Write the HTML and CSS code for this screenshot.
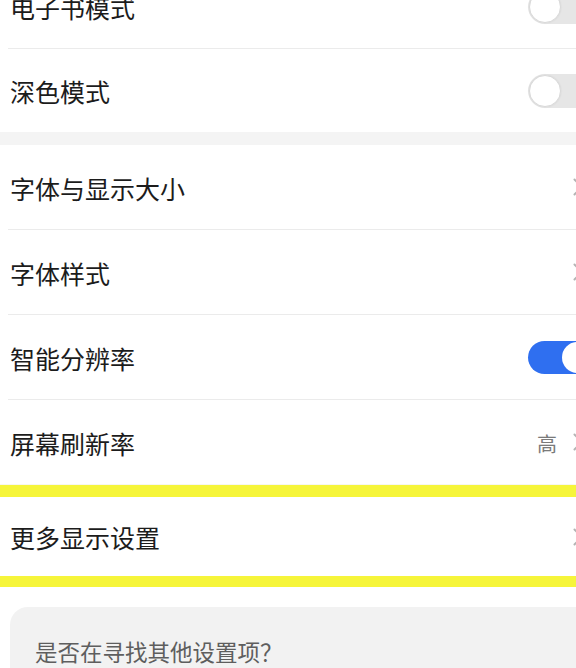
FILE: index.html
```html
<!DOCTYPE html>
<html lang="zh-CN">
<head>
<meta charset="utf-8">
<link rel="stylesheet" href="styles.css">
</head>
<body>
<div class="page">
  <section class="group">
    <div class="row r83">
      <span class="label">电子书模式</span>
      <span class="switch off"><span class="knob"></span></span>
    </div>
    <div class="divider"></div>
    <div class="row r83">
      <span class="label">深色模式</span>
      <span class="switch off"><span class="knob"></span></span>
    </div>
  </section>
  <div class="gap"></div>
  <section class="group">
    <div class="row">
      <span class="label">字体与显示大小</span>
      <span class="chev"><svg width="10" height="18" viewBox="0 0 10 18"><polyline points="1.5,1.5 8.5,9 1.5,16.5" fill="none" stroke="#b4b4b4" stroke-width="2" stroke-linecap="round" stroke-linejoin="round"/></svg></span>
    </div>
    <div class="divider"></div>
    <div class="row">
      <span class="label">字体样式</span>
      <span class="chev"><svg width="10" height="18" viewBox="0 0 10 18"><polyline points="1.5,1.5 8.5,9 1.5,16.5" fill="none" stroke="#b4b4b4" stroke-width="2" stroke-linecap="round" stroke-linejoin="round"/></svg></span>
    </div>
    <div class="divider"></div>
    <div class="row">
      <span class="label">智能分辨率</span>
      <span class="switch on"><span class="knob"></span></span>
    </div>
    <div class="divider"></div>
    <div class="row">
      <span class="label">屏幕刷新率</span>
      <span class="right">
        <span class="value">高</span>
        <span class="chev"><svg width="10" height="18" viewBox="0 0 10 18"><polyline points="1.5,1.5 8.5,9 1.5,16.5" fill="none" stroke="#b4b4b4" stroke-width="2" stroke-linecap="round" stroke-linejoin="round"/></svg></span>
      </span>
    </div>
  </section>
  <div class="thin"></div>
  <div class="mark"></div>
  <div class="row r79">
    <span class="label">更多显示设置</span>
    <span class="chev"><svg width="10" height="18" viewBox="0 0 10 18"><polyline points="1.5,1.5 8.5,9 1.5,16.5" fill="none" stroke="#b4b4b4" stroke-width="2" stroke-linecap="round" stroke-linejoin="round"/></svg></span>
  </div>
  <div class="mark m11"></div>
  <div class="card">
    <p class="hint">是否在寻找其他设置项？</p>
  </div>
</div>
</body>
</html>
```

FILE: styles.css
```css
html, body {
  margin: 0;
  padding: 0;
  background: #ffffff;
  overflow: hidden;
}
body {
  width: 576px;
  height: 668px;
  font-family: "Noto Sans CJK SC", "Noto Sans", sans-serif;
  color: #1c1c1c;
}
.page {
  width: 600px;
  margin-top: -35px;
}
.group {
  background: #ffffff;
}
.row {
  display: flex;
  align-items: center;
  justify-content: space-between;
  height: 84px;
  padding: 0 5px 0 10px;
  box-sizing: border-box;
  background: #ffffff;
}
.r83 { height: 83px; }
.r79 { height: 79px; }
.label {
  font-size: 25px;
  line-height: 1;
  padding-top: 2px;
  letter-spacing: 0;
}
.divider {
  height: 1px;
  margin-left: 8px;
  background: #ebebeb;
}
.gap {
  height: 13px;
  background: #f4f4f4;
}
.thin {
  height: 1px;
  background: #f7f7ef;
}
.mark {
  height: 12px;
  background: #f6f53a;
}
.m11 { height: 11px; }
.switch {
  display: flex;
  align-items: center;
  width: 67px;
  height: 34px;
  border-radius: 17px;
  box-sizing: border-box;
  padding: 1px;
}
.switch.off {
  background: #e6e6e6;
  justify-content: flex-start;
}
.switch.on {
  background: #2f6ff0;
  justify-content: flex-end;
  height: 33px;
  padding: 1px 2px;
}
.knob {
  width: 32px;
  height: 32px;
  border-radius: 50%;
  background: #ffffff;
  box-sizing: border-box;
}
.switch.off .knob {
  border: 1.5px solid #d9d9d9;
  box-shadow: 0 0 2px rgba(0,0,0,0.08);
}
.switch.on .knob {
  width: 31px;
  height: 31px;
}
.right {
  display: flex;
  align-items: center;
}
.value {
  font-size: 20px;
  color: #7a7a7a;
  margin-right: 16px;
  padding-top: 2px;
}
.chev {
  display: flex;
  align-items: center;
  width: 22px;
  height: 20px;
}
.chev svg { display: block; }
.card {
  margin: 20px 0 0 10px;
  height: 120px;
  background: #f2f2f2;
  border-radius: 18px;
  padding: 33px 0 0 25px;
  box-sizing: border-box;
}
.hint {
  margin: 0;
  font-size: 22.5px;
  line-height: 1;
  color: #5e5e5e;
}
```
